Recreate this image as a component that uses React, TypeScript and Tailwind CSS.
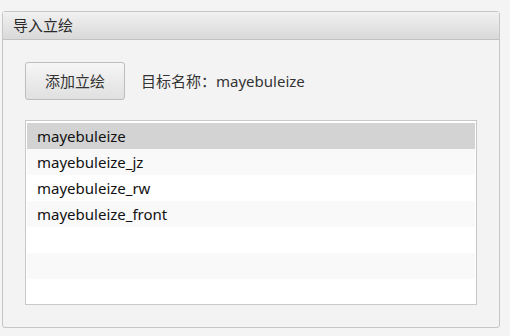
const items = ["mayebuleize", "mayebuleize_jz", "mayebuleize_rw", "mayebuleize_front", "", "", ""];

export default function App() {
  const font = { fontFamily: '"Noto Sans", "Noto Sans CJK SC", sans-serif' };
  return (
    <div className="w-[510px] h-[336px] bg-[#f4f4f4] pt-[11px] pl-[2px]" style={font}>
      <div className="w-[498px] h-[317px] border border-[#c6c6c6] rounded-[3px] bg-[#f3f3f3] flex flex-col">
        <div className="h-[28px] border-b border-[#c2c2c2] bg-gradient-to-b from-[#f1f1f1] to-[#d9d9d9] flex items-center pl-[10px] text-[15px] text-[#2a2a2a]">
          导入立绘
        </div>
        <div className="pl-[22px] pt-[22px]">
          <div className="flex items-center">
            <button className="w-[100px] h-[38px] border border-[#bdbdbd] rounded-[3px] bg-gradient-to-b from-[#f6f6f6] to-[#e0e0e0] text-[15px] text-[#333]">
              添加立绘
            </button>
            <span className="ml-[16px] text-[15px] text-[#333]">目标名称：mayebuleize</span>
          </div>
          <div className="mt-[20px] w-[452px] h-[185px] border border-[#c8c8c8] bg-white pt-[2px] px-[1px] overflow-hidden">
            {items.map((t, i) => (
              <div
                key={i}
                className={`h-[26px] flex items-center pl-[10px] text-[15px] text-[#111] ${
                  i === 0 ? "bg-[#d3d3d3]" : i % 2 === 1 ? "bg-[#f9f9f9]" : "bg-white"
                }`}
              >
                {t}
              </div>
            ))}
          </div>
        </div>
      </div>
    </div>
  );
}
